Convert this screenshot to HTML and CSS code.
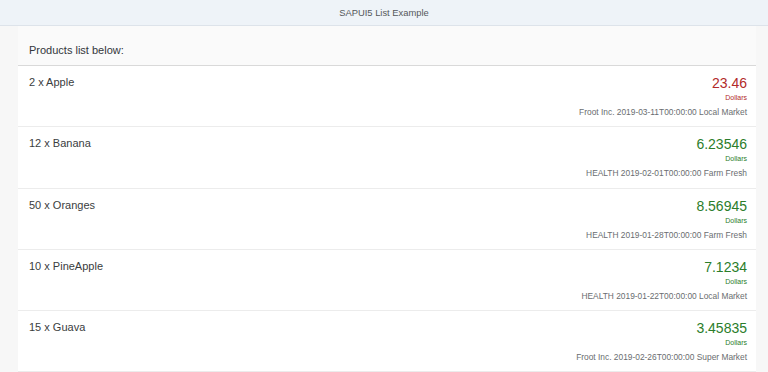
FILE: index.html
```html
<!DOCTYPE html>
<html lang="en">
<head>
<meta charset="utf-8">
<title>SAPUI5 List Example</title>
<link rel="stylesheet" href="styles.css">
</head>
<body>
<header class="bar">SAPUI5 List Example</header>
<main class="content">
  <section class="list">
    <div class="list-head">Products list below:</div>
    <div class="item">
      <div class="item-title">2 x Apple</div>
      <div class="item-side">
        <div class="num neg">23.46</div>
        <div class="unit neg">Dollars</div>
        <div class="attr">Froot Inc. 2019-03-11T00:00:00 Local Market</div>
      </div>
    </div>
    <div class="item">
      <div class="item-title">12 x Banana</div>
      <div class="item-side">
        <div class="num pos">6.23546</div>
        <div class="unit pos">Dollars</div>
        <div class="attr">HEALTH 2019-02-01T00:00:00 Farm Fresh</div>
      </div>
    </div>
    <div class="item">
      <div class="item-title">50 x Oranges</div>
      <div class="item-side">
        <div class="num pos">8.56945</div>
        <div class="unit pos">Dollars</div>
        <div class="attr">HEALTH 2019-01-28T00:00:00 Farm Fresh</div>
      </div>
    </div>
    <div class="item">
      <div class="item-title">10 x PineApple</div>
      <div class="item-side">
        <div class="num pos">7.1234</div>
        <div class="unit pos">Dollars</div>
        <div class="attr">HEALTH 2019-01-22T00:00:00 Local Market</div>
      </div>
    </div>
    <div class="item">
      <div class="item-title">15 x Guava</div>
      <div class="item-side">
        <div class="num pos">3.45835</div>
        <div class="unit pos">Dollars</div>
        <div class="attr">Froot Inc. 2019-02-26T00:00:00 Super Market</div>
      </div>
    </div>
  </section>
</main>
</body>
</html>
```

FILE: styles.css
```css
html, body {
  margin: 0;
  padding: 0;
  background: #f7f7f7;
  font-family: "Liberation Sans", Arial, sans-serif;
  color: #32363a;
  overflow: hidden;
}

.bar {
  height: 25px;
  line-height: 25px;
  text-align: center;
  font-size: 9.4px;
  color: #55585b;
  background: #eef3f8;
  border-bottom: 1px solid #dde3ea;
}

.content {
  padding: 0 12px 0 18px;
}

.list {
  display: flex;
  flex-direction: column;
}

.list-head {
  box-sizing: border-box;
  height: 40px;
  line-height: 49px;
  padding-left: 11px;
  font-size: 11px;
  color: #32363a;
  background: #fafafa;
  border-bottom: 1px solid #d9d9d9;
}

.item {
  height: 61.3px;
  box-sizing: border-box;
  background: #fff;
  border-bottom: 1px solid #ececec;
  display: flex;
  justify-content: space-between;
  padding: 10px 9px 0 11px;
}

.item-title {
  font-size: 11px;
  line-height: 13px;
  color: #3a3d40;
}

.item-side {
  display: flex;
  flex-direction: column;
  align-items: flex-end;
}

.num {
  font-size: 14px;
  line-height: 16px;
  margin-top: -1px;
}

.unit {
  font-size: 7px;
  line-height: 9px;
  margin-top: 2px;
}

.attr {
  font-size: 8.4px;
  line-height: 10px;
  margin-top: 5px;
  color: #6a6d70;
}

.neg { color: #b22a2a; }
.pos { color: #2b7d2b; }
```
